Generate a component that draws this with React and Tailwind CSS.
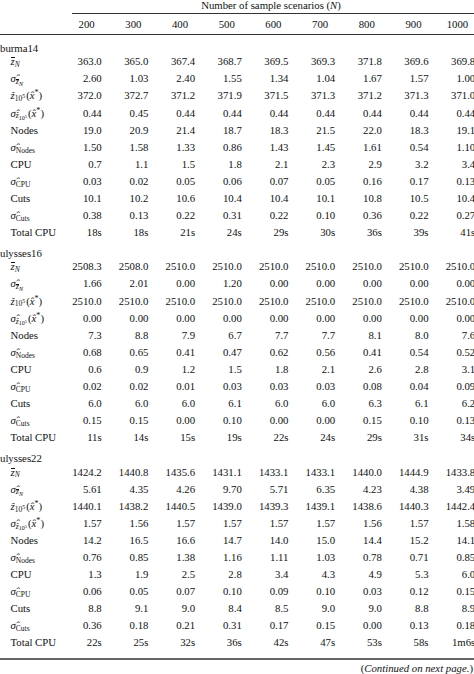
import React from "react";

const COLS = ["200", "300", "400", "500", "600", "700", "800", "900", "1000"];

const Zbar = ({ small }) => (
  <span
    className={
      "inline-block italic border-t-[0.8px] border-current " +
      (small ? "leading-[4px] text-[8px]" : "leading-[6px]")
    }
  >
    z
  </span>
);

const Hat = ({ ch }) => <span className="italic">{ch + "\u0302"}</span>;

const S = ({ children }) => (
  <sub className="text-[7.5px] not-italic">{children}</sub>
);

const LABELS = [
  <span key="a">
    <Zbar />
    <sub className="text-[7.5px] italic">N</sub>
  </span>,
  <span key="b">
    <Hat ch="σ" />
    <sub className="text-[7.5px]">
      <Zbar small />
      <sub className="text-[6px] italic">N</sub>
    </sub>
  </span>,
  <span key="c">
    <Hat ch="z" />
    <sub className="text-[7.5px]">
      10<sup className="text-[6px]">5</sup>
    </sub>
    <span className="ml-[1px]">
      (<Hat ch="x" />
      <sup>*</sup>)
    </span>
  </span>,
  <span key="d">
    <Hat ch="σ" />
    <sub className="text-[7.5px]">
      <span className="italic">{"z\u0302"}</span>
      <sub className="text-[6px]">
        10<sup>5</sup>
      </sub>
    </sub>
    <span className="ml-[1px]">
      (<Hat ch="x" />
      <sup>*</sup>)
    </span>
  </span>,
  <span key="e">Nodes</span>,
  <span key="f">
    <Hat ch="σ" />
    <S>Nodes</S>
  </span>,
  <span key="g">CPU</span>,
  <span key="h">
    <Hat ch="σ" />
    <S>CPU</S>
  </span>,
  <span key="i">Cuts</span>,
  <span key="j">
    <Hat ch="σ" />
    <S>Cuts</S>
  </span>,
  <span key="k">Total CPU</span>,
];

const r = (s) => s.split(" ");

const GROUPS = [
  {
    name: "burma14",
    rows: [
      r("363.0 365.0 367.4 368.7 369.5 369.3 371.8 369.6 369.8"),
      r("2.60 1.03 2.40 1.55 1.34 1.04 1.67 1.57 1.00"),
      r("372.0 372.7 371.2 371.9 371.5 371.3 371.2 371.3 371.0"),
      r("0.44 0.45 0.44 0.44 0.44 0.44 0.44 0.44 0.44"),
      r("19.0 20.9 21.4 18.7 18.3 21.5 22.0 18.3 19.1"),
      r("1.50 1.58 1.33 0.86 1.43 1.45 1.61 0.54 1.10"),
      r("0.7 1.1 1.5 1.8 2.1 2.3 2.9 3.2 3.4"),
      r("0.03 0.02 0.05 0.06 0.07 0.05 0.16 0.17 0.13"),
      r("10.1 10.2 10.6 10.4 10.4 10.1 10.8 10.5 10.4"),
      r("0.38 0.13 0.22 0.31 0.22 0.10 0.36 0.22 0.27"),
      r("18s 18s 21s 24s 29s 30s 36s 39s 41s"),
    ],
  },
  {
    name: "ulysses16",
    rows: [
      r("2508.3 2508.0 2510.0 2510.0 2510.0 2510.0 2510.0 2510.0 2510.0"),
      r("1.66 2.01 0.00 1.20 0.00 0.00 0.00 0.00 0.00"),
      r("2510.0 2510.0 2510.0 2510.0 2510.0 2510.0 2510.0 2510.0 2510.0"),
      r("0.00 0.00 0.00 0.00 0.00 0.00 0.00 0.00 0.00"),
      r("7.3 8.8 7.9 6.7 7.7 7.7 8.1 8.0 7.6"),
      r("0.68 0.65 0.41 0.47 0.62 0.56 0.41 0.54 0.52"),
      r("0.6 0.9 1.2 1.5 1.8 2.1 2.6 2.8 3.1"),
      r("0.02 0.02 0.01 0.03 0.03 0.03 0.08 0.04 0.09"),
      r("6.0 6.0 6.0 6.1 6.0 6.0 6.3 6.1 6.2"),
      r("0.15 0.15 0.00 0.10 0.00 0.00 0.15 0.10 0.13"),
      r("11s 14s 15s 19s 22s 24s 29s 31s 34s"),
    ],
  },
  {
    name: "ulysses22",
    rows: [
      r("1424.2 1440.8 1435.6 1431.1 1433.1 1433.1 1440.0 1444.9 1433.8"),
      r("5.61 4.35 4.26 9.70 5.71 6.35 4.23 4.38 3.49"),
      r("1440.1 1438.2 1440.5 1439.0 1439.3 1439.1 1438.6 1440.3 1442.4"),
      r("1.57 1.56 1.57 1.57 1.57 1.57 1.56 1.57 1.58"),
      r("14.2 16.5 16.6 14.7 14.0 15.0 14.4 15.2 14.1"),
      r("0.76 0.85 1.38 1.16 1.11 1.03 0.78 0.71 0.85"),
      r("1.3 1.9 2.5 2.8 3.4 4.3 4.9 5.3 6.0"),
      r("0.06 0.05 0.07 0.10 0.09 0.10 0.03 0.12 0.15"),
      r("8.8 9.1 9.0 8.4 8.5 9.0 9.0 8.8 8.9"),
      r("0.36 0.18 0.21 0.31 0.17 0.15 0.00 0.13 0.18"),
      r("22s 25s 32s 36s 42s 47s 53s 58s 1m6s"),
    ],
  },
];

export default function App() {
  return (
    <div className="w-[474px] h-[674px] overflow-hidden bg-white text-[#111] [font-family:'Liberation_Serif',serif] text-[10.75px]">
      <div className="w-[476px]">
        {/* spanner caption */}
        <div className="h-[13px] pl-[66px] text-center leading-[10px] whitespace-nowrap">
          Number of sample scenarios (<span className="italic">N</span>)
        </div>
        <div className="ml-[72px] h-px bg-[#333]" />
        {/* column header row */}
        <div className="grid grid-cols-[55px_repeat(9,46.7px)] h-[20px] items-center">
          <div />
          {COLS.map((c) => (
            <div key={c} className="text-right pr-[7px] leading-none">
              {c}
            </div>
          ))}
        </div>
        <div className="h-px bg-[#333]" />
        {/* body */}
        <div className="grid grid-cols-[55px_repeat(9,46.7px)] auto-rows-[17.1px] items-center mt-[1px]">
          {GROUPS.map((g) => (
            <React.Fragment key={g.name}>
              <div className="col-span-10 self-end leading-[9px] whitespace-nowrap">
                {g.name}
              </div>
              {g.rows.map((vals, i) => (
                <React.Fragment key={i}>
                  <div className="pl-[10.5px] whitespace-nowrap leading-none">
                    {LABELS[i]}
                  </div>
                  {vals.map((v, j) => (
                    <div key={j} className="text-right leading-none whitespace-nowrap">
                      {v}
                    </div>
                  ))}
                </React.Fragment>
              ))}
            </React.Fragment>
          ))}
        </div>
        <div className="mt-[7px] h-[2px] bg-[#666]" />
        <div className="mt-[3px] w-[474px] pr-[1px] text-right leading-[11px] whitespace-nowrap">
          (<span className="italic">Continued on next page.</span>)
        </div>
      </div>
    </div>
  );
}
